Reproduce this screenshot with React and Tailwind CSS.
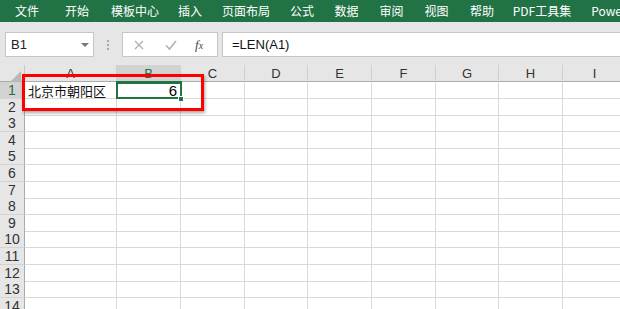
import React from 'react'

const tabs = [
  ['文件', 'w-[50px]'],
  ['开始', 'w-[50px]'],
  ['模板中心', 'w-[66px]'],
  ['插入', 'w-[44px]'],
  ['页面布局', 'w-[68px]'],
  ['公式', 'w-[44px]'],
  ['数据', 'w-[45px]'],
  ['审阅', 'w-[45px]'],
  ['视图', 'w-[45px]'],
  ['帮助', 'w-[46px]'],
  ['PDF工具集', 'w-[74px]'],
  ['Power', 'w-[60px]'],
]

const cols = ['A', 'B', 'C', 'D', 'E', 'F', 'G', 'H', 'I']
const rows = [1, 2, 3, 4, 5, 6, 7, 8, 9, 10, 11, 12, 13, 14]
const gridCols = 'grid grid-cols-[25px_92px_64px_64px_63px_64px_64px_63px_64px_64px]'

function Ribbon() {
  return (
    <div className="h-[22px] bg-[#217346] flex items-center pl-[2px] text-white text-[12px] font-['Noto_Sans_CJK_SC',sans-serif] whitespace-nowrap">
      {tabs.map(([t, w]) => (
        <div key={t} className={`${w} shrink-0 text-center leading-[22px]`}>{t}</div>
      ))}
    </div>
  )
}

function FormulaBar() {
  return (
    <div className="h-[43px] bg-[#e6e6e6] flex pt-[10px] pl-[5px] font-['Liberation_Sans',sans-serif]">
      <div className="w-[89px] h-[25px] bg-white border border-[#c6c6c6] flex items-center justify-between pl-[5px] pr-[4px] text-[13px] text-[#222]">
        <span>B1</span>
        <span className="w-0 h-0 border-l-[4px] border-r-[4px] border-t-[4px] border-l-transparent border-r-transparent border-t-[#777]" />
      </div>
      <div className="w-[28px] flex flex-col items-center justify-center gap-[2px] h-[25px]">
        <span className="w-[2px] h-[2px] bg-[#a8a8a8]" />
        <span className="w-[2px] h-[2px] bg-[#a8a8a8]" />
        <span className="w-[2px] h-[2px] bg-[#a8a8a8]" />
      </div>
      <div className="w-[96px] h-[25px] bg-white border border-[#c6c6c6] flex items-center text-[#b5b5b5]">
        <svg width="12" height="12" viewBox="0 0 12 12" className="ml-[10px]">
          <path d="M2 2 L10 10 M10 2 L2 10" stroke="#b0b0b0" strokeWidth="1.3" />
        </svg>
        <svg width="14" height="12" viewBox="0 0 14 12" className="ml-[19px]">
          <path d="M2 6.5 L5.5 10 L12 2" stroke="#b0b0b0" strokeWidth="1.6" fill="none" />
        </svg>
        <span className="ml-[17px] text-[13px] italic text-[#444] font-['Liberation_Serif',serif]">f<span className="text-[10px]">x</span></span>
      </div>
      <div className="ml-[4px] flex-1 h-[25px] bg-white border border-[#c6c6c6] border-r-0 flex items-center pl-[9px] text-[13px] text-[#111]">
        =LEN(A1)
      </div>
    </div>
  )
}

function Sheet() {
  return (
    <div className="relative bg-white font-['Liberation_Sans',sans-serif]">
      <div className={`${gridCols} h-[17px] bg-[#e6e6e6] border-b border-[#ababab]`}>
        <div className="relative border-r border-[#c8c8c8]">
          <svg width="11" height="11" viewBox="0 0 11 11" className="absolute right-[3px] bottom-[2px]">
            <path d="M11 0 L11 11 L0 11 Z" fill="#b8b8b8" />
          </svg>
        </div>
        {cols.map(c => (
          <div
            key={c}
            className={`border-r border-[#cfcfcf] text-center text-[13px] leading-[17px] ${c === 'B' ? 'bg-[#d2d2d2] text-[#217346] border-b-2 border-b-[#217346]' : 'text-[#333]'}`}
          >
            {c}
          </div>
        ))}
      </div>
      {rows.map(r => (
        <div key={r} className={`${gridCols} h-[16.6px]`}>
          <div className={`border-r border-[#ababab] border-b border-b-[#d4d4d4] text-center text-[14px] leading-[16px] ${r === 1 ? 'bg-[#d2d2d2] text-[#217346]' : 'bg-[#e6e6e6] text-[#333]'}`}>
            {r}
          </div>
          {cols.map(c => (
            <div key={c} className="relative border-r border-b border-[#d9d9d9] text-[15px] leading-[16px] whitespace-nowrap">
              {r === 1 && c === 'A' && (
                <span className="absolute left-[3px] top-[1px] font-['Noto_Sans_CJK_SC',sans-serif] text-[13px] leading-[16px] text-[#111]">北京市朝阳区</span>
              )}
              {r === 1 && c === 'B' && (
                <span className="absolute right-[3px] top-[1px] text-[15px] leading-[16px] text-black">6</span>
              )}
            </div>
          ))}
        </div>
      ))}
      <div className="absolute left-[116px] top-[16px] w-[66px] h-[18px] border-2 border-[#217346] pointer-events-none" />
      <div className="absolute left-[178px] top-[31px] w-[6px] h-[6px] bg-[#217346] border border-white" />
      <div className="absolute left-[22px] top-[9px] w-[182px] h-[37px] border-[3px] border-[#ff0000] shadow-[1px_2px_3px_rgba(0,0,0,0.35)] pointer-events-none" />
    </div>
  )
}

export default function App() {
  return (
    <div className="w-[620px] h-[309px] overflow-hidden bg-white">
      <Ribbon />
      <FormulaBar />
      <Sheet />
    </div>
  )
}
